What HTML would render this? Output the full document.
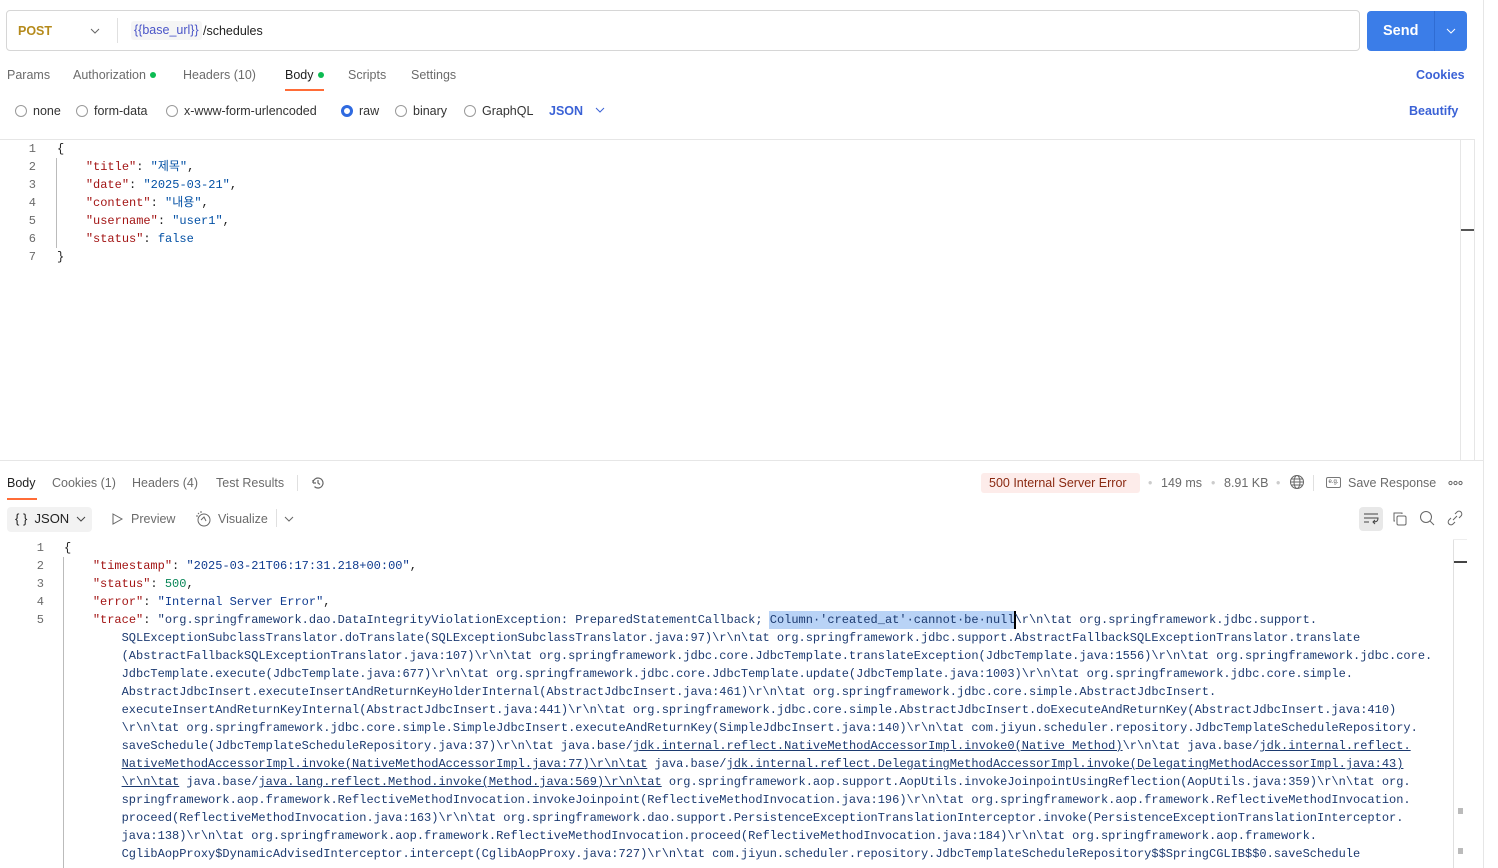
<!DOCTYPE html>
<html><head><meta charset="utf-8"><style>
*{box-sizing:border-box;margin:0;padding:0}
body{width:1498px;height:868px;overflow:hidden;background:#fff;font-family:"Liberation Sans","Noto Sans CJK KR",sans-serif;font-size:12.5px;color:#6b6b6b;position:relative}
.a{position:absolute;white-space:nowrap}
.mono{font-family:"Liberation Mono","Noto Sans CJK KR",monospace;font-size:12px;line-height:18px;white-space:pre}
.mono div{white-space:pre}
.k{color:#a31515}.s{color:#0f3b8f}.n{color:#098658}.b{color:#0451a5}.p{color:#212121}
.t{color:#1c3a70}
.radio{display:inline-block;width:12px;height:12px;border:1px solid #9a9a9a;border-radius:50%;vertical-align:-2px;margin-right:6px}
.dot{display:inline-block;width:6px;height:6px;border-radius:50%;background:#0cbb52;margin-left:4px;vertical-align:1px}
.ln{color:#6b6b6b;text-align:right;width:20px}
</style></head><body>
<div class="a" style="left:6px;top:10px;width:1354px;height:41px;border:1px solid #d6d6d6;border-radius:4px"></div>
<div class="a" style="left:18px;top:24px;font-weight:bold;color:#b58a1b;font-size:12.5px">POST</div>
<svg class="a" style="left:90px;top:27px" width="10" height="8"><path d="M1 2l4 4 4-4" stroke="#666" fill="none"/></svg>
<div class="a" style="left:117px;top:18px;width:1px;height:25px;background:#e0e0e0"></div>
<div class="a" style="left:131px;top:21px;height:19px;padding:2px 3px;background:#f5f5f5;border-radius:3px;color:#4a55c8;font-size:12.5px">{{base_url}}</div>
<div class="a" style="left:203px;top:24px;color:#212121;font-size:12.5px">/schedules</div>
<div class="a" style="left:1367px;top:11px;width:100px;height:40px;background:#3b7de8;border-radius:4px"></div>
<div class="a" style="left:1434px;top:11px;width:1px;height:40px;background:#2f6cd3"></div>
<div class="a" style="left:1383px;top:23px;color:#fff;font-weight:bold;font-size:14.5px">Send</div>
<svg class="a" style="left:1446px;top:28px" width="10" height="7"><path d="M1 1l4 4 4-4" stroke="#fff" fill="none"/></svg>
<div class="a" style="left:1483px;top:0;width:1px;height:868px;background:#e6e6e6"></div>
<div class="a" style="left:7px;top:68px">Params</div>
<div class="a" style="left:73px;top:68px">Authorization<span class="dot"></span></div>
<div class="a" style="left:183px;top:68px">Headers (10)</div>
<div class="a" style="left:285px;top:68px;color:#212121">Body<span class="dot"></span></div>
<div class="a" style="left:285px;top:89px;width:39px;height:2px;background:#ff6c37"></div>
<div class="a" style="left:348px;top:68px">Scripts</div>
<div class="a" style="left:411px;top:68px">Settings</div>
<div class="a" style="left:1416px;top:68px;color:#3b62d6;font-weight:bold">Cookies</div>
<div class="a" style="left:15px;top:104px;color:#333"><span class="radio"></span>none</div>
<div class="a" style="left:76px;top:104px;color:#333"><span class="radio"></span>form-data</div>
<div class="a" style="left:166px;top:104px;color:#333"><span class="radio"></span>x-www-form-urlencoded</div>
<div class="a" style="left:341px;top:104px;color:#333"><span class="radio" style="border:3.5px solid #2f6ae0"></span>raw</div>
<div class="a" style="left:395px;top:104px;color:#333"><span class="radio"></span>binary</div>
<div class="a" style="left:464px;top:104px;color:#333"><span class="radio"></span>GraphQL</div>
<div class="a" style="left:549px;top:104px;color:#3b62d6;font-weight:bold">JSON</div>
<svg class="a" style="left:595px;top:107px" width="10" height="7"><path d="M1 1l4 4 4-4" stroke="#3b62d6" fill="none"/></svg>
<div class="a" style="left:1409px;top:104px;color:#3b62d6;font-weight:bold">Beautify</div>
<div class="a" style="left:0;top:139px;width:1475px;height:1px;background:#e6e6e6"></div>
<div class="a" style="left:1460px;top:140px;width:1px;height:320px;background:#e6e6e6"></div>
<div class="a" style="left:1474px;top:140px;width:1px;height:320px;background:#e6e6e6"></div>
<div class="a" style="left:1461px;top:229px;width:13px;height:2px;background:#555"></div>
<div class="a" style="left:0;top:460px;width:1483px;height:1px;background:#e6e6e6"></div>
<div class="a mono" style="left:16px;top:140px"><div class="ln">1</div><div class="ln">2</div><div class="ln">3</div><div class="ln">4</div><div class="ln">5</div><div class="ln">6</div><div class="ln">7</div></div>
<div class="a" style="left:56px;top:158px;width:1px;height:90px;background:#bbb"></div>
<div class="a mono" style="left:57px;top:140px"><div class="p">{</div><div>    <span class="k">"title"</span><span class="p">: </span><span class="b">"제목"</span><span class="p">,</span></div><div>    <span class="k">"date"</span><span class="p">: </span><span class="b">"2025-03-21"</span><span class="p">,</span></div><div>    <span class="k">"content"</span><span class="p">: </span><span class="b">"내용"</span><span class="p">,</span></div><div>    <span class="k">"username"</span><span class="p">: </span><span class="b">"user1"</span><span class="p">,</span></div><div>    <span class="k">"status"</span><span class="p">: </span><span class="b">false</span></div><div class="p">}</div></div>
<div class="a" style="left:7px;top:476px;color:#212121">Body</div>
<div class="a" style="left:7px;top:498px;width:30px;height:2px;background:#ff6c37"></div>
<div class="a" style="left:52px;top:476px">Cookies (1)</div>
<div class="a" style="left:132px;top:476px">Headers (4)</div>
<div class="a" style="left:216px;top:476px">Test Results</div>
<div class="a" style="left:297px;top:475px;width:1px;height:16px;background:#e0e0e0"></div>
<svg class="a" style="left:310px;top:475px" width="16" height="16" viewBox="0 0 16 16"><path d="M3 8a5 5 0 1 1 1.5 3.6M3 8V5M3 8h3M8 5v3l2 1.5" stroke="#666" fill="none" stroke-width="1.2"/></svg>
<div class="a" style="left:981px;top:473px;width:159px;height:20px;background:#fdecea;border-radius:3px"></div>
<div class="a" style="left:989px;top:476px;color:#8a2a12">500 Internal Server Error</div>
<div class="a" style="left:1148px;top:476px;color:#ccc">•</div>
<div class="a" style="left:1161px;top:476px">149 ms</div>
<div class="a" style="left:1211px;top:476px;color:#ccc">•</div>
<div class="a" style="left:1224px;top:476px">8.91 KB</div>
<div class="a" style="left:1276px;top:476px;color:#ccc">•</div>
<svg class="a" style="left:1289px;top:474px" width="16" height="16" viewBox="0 0 16 16"><circle cx="8" cy="8" r="6.5" stroke="#666" fill="none"/><ellipse cx="8" cy="8" rx="3" ry="6.5" stroke="#666" fill="none"/><path d="M1.5 8h13M2.5 5h11M2.5 11h11" stroke="#666"/></svg>
<div class="a" style="left:1313px;top:475px;width:1px;height:16px;background:#e0e0e0"></div>
<div class="a" style="left:1326px;top:477px;width:15px;height:11px;border:1px solid #777;border-radius:2px;font-size:6px;line-height:9px;text-align:center;color:#555">e.g.</div>
<div class="a" style="left:1348px;top:476px">Save Response</div>
<svg class="a" style="left:1448px;top:480px" width="16" height="6"><circle cx="2.5" cy="3" r="1.6" stroke="#666" fill="none"/><circle cx="7.5" cy="3" r="1.6" stroke="#666" fill="none"/><circle cx="12.5" cy="3" r="1.6" stroke="#666" fill="none"/></svg>
<div class="a" style="left:7px;top:507px;width:85px;height:25px;background:#f2f2f2;border-radius:4px"></div>
<div class="a" style="left:15px;top:511px;color:#212121;font-size:13px">{ }&nbsp; JSON</div>
<svg class="a" style="left:76px;top:516px" width="10" height="7"><path d="M1 1l4 4 4-4" stroke="#444" fill="none"/></svg>
<svg class="a" style="left:111px;top:513px" width="12" height="12"><path d="M2 1l9 5-9 5z" stroke="#666" fill="none"/></svg>
<div class="a" style="left:131px;top:512px">Preview</div>
<svg class="a" style="left:195px;top:510px" width="18" height="18" viewBox="0 0 18 18"><circle cx="9" cy="10" r="6" stroke="#666" fill="none"/><path d="M6 10l3-3 2 4M3 3l1 1M1 6h2M6 1v2" stroke="#666" fill="none"/></svg>
<div class="a" style="left:218px;top:512px">Visualize</div>
<div class="a" style="left:276px;top:509px;width:1px;height:18px;background:#e0e0e0"></div>
<svg class="a" style="left:284px;top:516px" width="10" height="7"><path d="M1 1l4 4 4-4" stroke="#666" fill="none"/></svg>
<div class="a" style="left:1359px;top:507px;width:24px;height:24px;background:#e8e8e8;border-radius:4px"></div>
<svg class="a" style="left:1363px;top:512px" width="16" height="14"><path d="M1 2h14M1 6h14c0 4-3 4-5 4M12 8l-2 2 2 2M1 10h5" stroke="#444" fill="none"/></svg>
<svg class="a" style="left:1392px;top:511px" width="15" height="15"><rect x="5" y="5" width="9" height="9" rx="1.5" stroke="#666" fill="none"/><path d="M3 10H2V2h8v1" stroke="#666" fill="none"/></svg>
<svg class="a" style="left:1419px;top:510px" width="16" height="16"><circle cx="7" cy="7" r="5.5" stroke="#666" fill="none"/><path d="M11 11l4 4" stroke="#666"/></svg>
<svg class="a" style="left:1447px;top:510px" width="16" height="16"><path d="M6 10l4-4M8 4l2-2a2.8 2.8 0 0 1 4 4l-2 2M8 12l-2 2a2.8 2.8 0 0 1-4-4l2-2" stroke="#666" fill="none"/></svg>
<div class="a" style="left:1453px;top:539px;width:1px;height:329px;background:#e0e0e0"></div>
<div class="a" style="left:1453px;top:539px;width:14px;height:1px;background:#eee"></div>
<div class="a" style="left:1454px;top:561px;width:13px;height:2px;background:#444"></div>
<div class="a" style="left:1458px;top:808px;width:5px;height:6px;background:#bbb"></div>
<div class="a" style="left:1458px;top:848px;width:5px;height:6px;background:#bbb"></div>
<div class="a mono" style="left:24px;top:539px"><div class="ln">1</div><div class="ln">2</div><div class="ln">3</div><div class="ln">4</div><div class="ln">5</div></div>
<div class="a" style="left:63px;top:557px;width:1px;height:311px;background:#bbb"></div>
<div class="a" style="left:769px;top:611px;width:245px;height:18px;background:#b9d3f6"></div>
<div class="a" style="left:1014px;top:611px;width:2px;height:18px;background:#000"></div>
<div class="a mono" style="left:64px;top:539px"><div class="p">{</div><div>    <span class="k">"timestamp"</span><span class="p">: </span><span class="s">"2025-03-21T06:17:31.218+00:00"</span><span class="p">,</span></div><div>    <span class="k">"status"</span><span class="p">: </span><span class="n">500</span><span class="p">,</span></div><div>    <span class="k">"error"</span><span class="p">: </span><span class="s">"Internal Server Error"</span><span class="p">,</span></div><div>    <span class="k">"trace"</span><span class="p">: </span><span class="t">"org.springframework.dao.DataIntegrityViolationException: PreparedStatementCallback; Column·'created_at'·cannot·be·null\r\n\tat org.springframework.jdbc.support.</span></div><div class="t">        SQLExceptionSubclassTranslator.doTranslate(SQLExceptionSubclassTranslator.java:97)\r\n\tat org.springframework.jdbc.support.AbstractFallbackSQLExceptionTranslator.translate</div><div class="t">        (AbstractFallbackSQLExceptionTranslator.java:107)\r\n\tat org.springframework.jdbc.core.JdbcTemplate.translateException(JdbcTemplate.java:1556)\r\n\tat org.springframework.jdbc.core.</div><div class="t">        JdbcTemplate.execute(JdbcTemplate.java:677)\r\n\tat org.springframework.jdbc.core.JdbcTemplate.update(JdbcTemplate.java:1003)\r\n\tat org.springframework.jdbc.core.simple.</div><div class="t">        AbstractJdbcInsert.executeInsertAndReturnKeyHolderInternal(AbstractJdbcInsert.java:461)\r\n\tat org.springframework.jdbc.core.simple.AbstractJdbcInsert.</div><div class="t">        executeInsertAndReturnKeyInternal(AbstractJdbcInsert.java:441)\r\n\tat org.springframework.jdbc.core.simple.AbstractJdbcInsert.doExecuteAndReturnKey(AbstractJdbcInsert.java:410)</div><div class="t">        \r\n\tat org.springframework.jdbc.core.simple.SimpleJdbcInsert.executeAndReturnKey(SimpleJdbcInsert.java:140)\r\n\tat com.jiyun.scheduler.repository.JdbcTemplateScheduleRepository.</div><div class="t">        saveSchedule(JdbcTemplateScheduleRepository.java:37)\r\n\tat java.base/<u>jdk.internal.reflect.NativeMethodAccessorImpl.invoke0(Native Method)</u>\r\n\tat java.base/<u>jdk.internal.reflect.</u></div><div class="t">        <u>NativeMethodAccessorImpl.invoke(NativeMethodAccessorImpl.java:77)\r\n\tat</u> java.base/<u>jdk.internal.reflect.DelegatingMethodAccessorImpl.invoke(DelegatingMethodAccessorImpl.java:43)</u></div><div class="t">        <u>\r\n\tat</u> java.base/<u>java.lang.reflect.Method.invoke(Method.java:569)\r\n\tat</u> org.springframework.aop.support.AopUtils.invokeJoinpointUsingReflection(AopUtils.java:359)\r\n\tat org.</div><div class="t">        springframework.aop.framework.ReflectiveMethodInvocation.invokeJoinpoint(ReflectiveMethodInvocation.java:196)\r\n\tat org.springframework.aop.framework.ReflectiveMethodInvocation.</div><div class="t">        proceed(ReflectiveMethodInvocation.java:163)\r\n\tat org.springframework.dao.support.PersistenceExceptionTranslationInterceptor.invoke(PersistenceExceptionTranslationInterceptor.</div><div class="t">        java:138)\r\n\tat org.springframework.aop.framework.ReflectiveMethodInvocation.proceed(ReflectiveMethodInvocation.java:184)\r\n\tat org.springframework.aop.framework.</div><div class="t">        CglibAopProxy$DynamicAdvisedInterceptor.intercept(CglibAopProxy.java:727)\r\n\tat com.jiyun.scheduler.repository.JdbcTemplateScheduleRepository$$SpringCGLIB$$0.saveSchedule</div></div>
</body></html>
